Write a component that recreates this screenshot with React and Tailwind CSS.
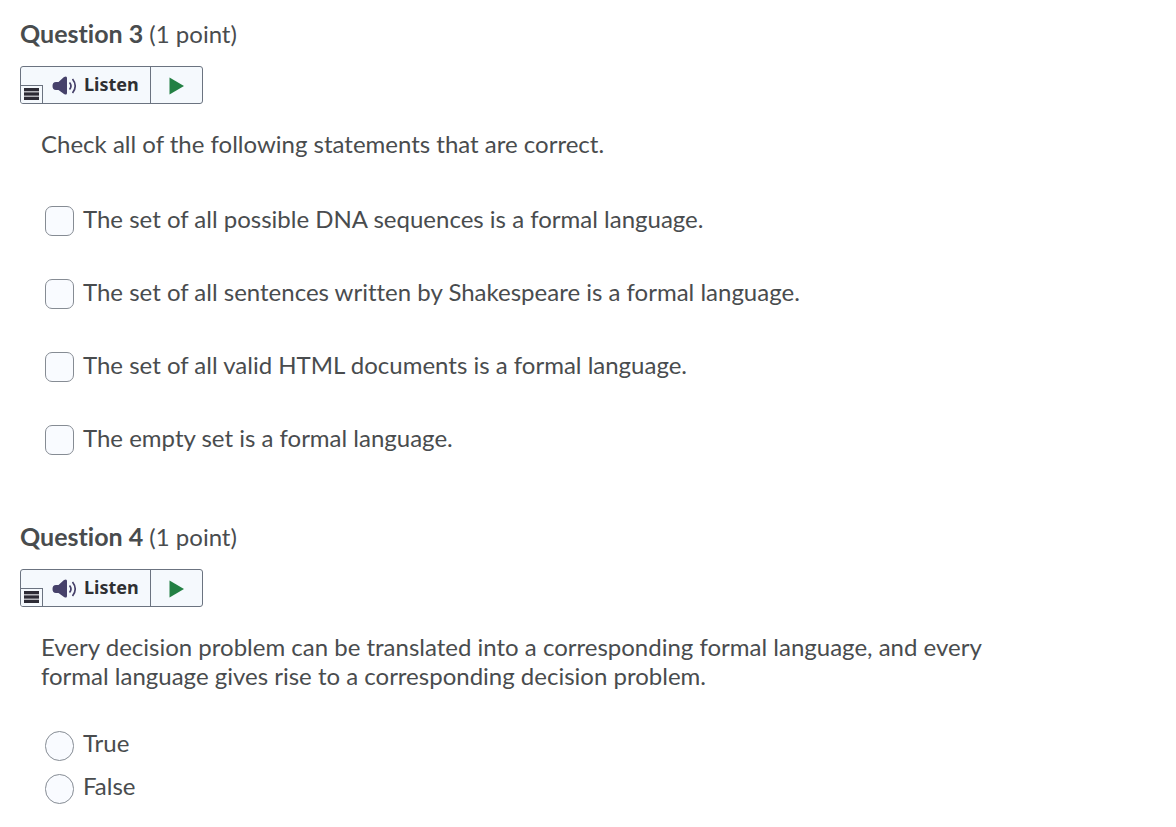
import { useId } from 'react'

const QUESTIONS = [
  {
    number: 3,
    points: '(1 point)',
    prompt: 'Check all of the following statements that are correct.',
    type: 'checkbox',
    options: [
      'The set of all possible DNA sequences is a formal language.',
      'The set of all sentences written by Shakespeare is a formal language.',
      'The set of all valid HTML documents is a formal language.',
      'The empty set is a formal language.',
    ],
  },
  {
    number: 4,
    points: '(1 point)',
    prompt:
      'Every decision problem can be translated into a corresponding formal language, and every formal language gives rise to a corresponding decision problem.',
    type: 'radio',
    options: ['True', 'False'],
  },
]

function SpeakerIcon() {
  return (
    <svg width="26" height="20" viewBox="0 0 26 20" aria-hidden="true">
      <path d="M0.500 11q0-4 3.500-4h2.500L12 2q3-1.500 3 1v15q0 2.500-3 1l-5.500-4H4Q0.500 15 0.500 11z" fill="#46416a" />
      <path d="M17.500 7.500q3 3.500 0 7M20.500 4q5.500 7 0 14" fill="none" stroke="#46416a" strokeWidth="1.700" />
    </svg>
  )
}

function ListenBar() {
  return (
    <div className="relative flex w-[183px] h-[38px] border border-[#6b7380] rounded-[3px] bg-[#f5f9fd] overflow-hidden">
      <button
        type="button"
        className="flex flex-1 items-center gap-[6px] pl-[31px] font-['Noto_Sans',sans-serif]
          text-lg leading-6 font-bold text-[#2f3033]"
      >
        <SpeakerIcon />
        <span className="pb-0.5">Listen</span>
      </button>
      <button
        type="button"
        aria-label="Play"
        className="flex w-[52px] items-center justify-center border-l border-[#6b7380]"
      >
        <svg width="16" height="20" viewBox="0 0 16 20" aria-hidden="true">
          <path d="M0.500 2.500l14.500 8.500-14.500 8.500z" fill="#238044" />
        </svg>
      </button>
      <button
        type="button"
        aria-label="Reading menu"
        className="absolute left-0 bottom-0 flex h-[18px] w-[22px] items-center justify-center
          border-t border-r border-[#6b7380] bg-[#f5f9fd]"
      >
        <svg width="15" height="13" viewBox="0 0 15 13" aria-hidden="true">
          <path d="M0 0h15v12H0z" fill="#b4b4ba" />
          <path d="M0 0h15v3H0zM0 4.500h15v3H0zM0 9h15v3H0z" fill="#2d2b35" />
        </svg>
      </button>
    </div>
  )
}

function Option({ type, name, label }) {
  const id = useId()
  const isRadio = type === 'radio'
  return (
    <div className="flex items-start gap-[9px]">
      <input
        id={id}
        type={type}
        name={name}
        className={`appearance-none shrink-0 w-[29px] h-[30px] border border-[#868c94] bg-[#f9fbff]
          checked:bg-[#006fbf] ${isRadio ? 'rounded-full' : 'rounded-[7px]'}`}
      />
      <label htmlFor={id} className={isRadio ? 'leading-[23px]' : 'leading-[25px]'}>
        {label}
      </label>
    </div>
  )
}

function Question({ number, points, prompt, type, options }) {
  const isRadio = type === 'radio'
  return (
    <section>
      <h2>
        <strong className="text-[25px] leading-[29px] font-bold">Question {number}</strong> {points}
      </h2>
      <div className="mt-[18px]">
        <ListenBar />
      </div>
      <fieldset className="mt-[25px] ml-[21px] max-w-[960px]">
        <legend>{prompt}</legend>
        <div className={isRadio ? 'mt-[41px] ml-1 flex flex-col gap-[13px]' : 'mt-12 ml-1 flex flex-col gap-[43px]'}>
          {options.map(label => (
            <Option key={label} type={type} name={`question-${number}`} label={label} />
          ))}
        </div>
      </fieldset>
    </section>
  )
}

export default function App() {
  return (
    <main
      className="flex flex-col gap-[67px] px-5 pt-[19px] pb-5 bg-white font-[Lato,sans-serif]
        text-2xl leading-[29px] text-[#494c4e] [font-variant-ligatures:none]"
    >
      {QUESTIONS.map(question => (
        <Question key={question.number} {...question} />
      ))}
    </main>
  )
}
